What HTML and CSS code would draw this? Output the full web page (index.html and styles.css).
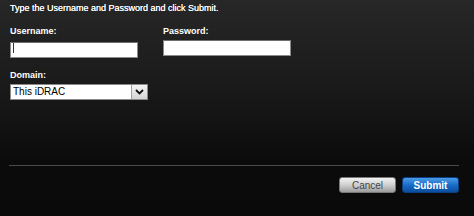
FILE: index.html
```html
<!DOCTYPE html>
<html>
    <head>
        <meta charset="UTF-8">
        <title>iDRAC Login</title>
        <link rel="stylesheet" href="styles.css">
    </head>
    <body>
        <div class="login-box">
            <p class="intro">Type the Username and Password and click Submit.</p>
            <div class="fields">
                <div class="field">
                    <label for="user">Username:</label>
                    <div class="input-wrap">
                        <input type="text" id="user" class="text-input">
                        <span class="caret"></span>
                    </div>
                </div>
                <div class="field">
                    <label for="pass">Password:</label>
                    <input type="password" id="pass" class="text-input">
                </div>
            </div>
            <div class="field">
                <label>Domain:</label>
                <div class="select">
                    <span class="select-text">This iDRAC</span>
                    <span class="select-arrow">
                        <svg width="9" height="6" viewBox="0 0 9 6">
                            <path d="M1 1 L4.5 4.5 L8 1" fill="none" stroke="#111" stroke-width="1.8"/>
                        </svg>
                    </span>
                </div>
            </div>
            <div class="footer">
                <button class="btn cancel">Cancel</button>
                <button class="btn submit">Submit</button>
            </div>
        </div>
    </body>
</html>
```

FILE: styles.css
```css
*{
    margin: 0;
    padding: 0;
    box-sizing: border-box;
    font-family: "Liberation Sans", Arial, sans-serif;
}
html, body{
    height: 100%;
}
body{
    background: linear-gradient(#272727 0%, #1a1a1a 40%, #0b0b0b 75%, #0a0a0a 100%);
    color: white;
}
.login-box{
    padding: 2px 15px 0 9px;
}
.intro{
    font-size: 9px;
    padding-left: 1px;
    line-height: 12px;
    text-shadow: 0 0 0.4px #fff;
}
.fields{
    display: flex;
    gap: 24px;
    margin-top: 11px;
}
.field{
    display: flex;
    flex-direction: column;
    padding-left: 1px;
}
.fields + .field{
    margin-top: 11px;
}
label{
    font-size: 9px;
    font-weight: bold;
    line-height: 12px;
    margin-bottom: 3px;
}
.input-wrap{
    position: relative;
}
.text-input{
    width: 128px;
    height: 16px;
    border: 1px solid #8a8a8a;
    border-top-color: #6e6e6e;
    background: #fff;
    outline: none;
}
.caret{
    position: absolute;
    left: 3px;
    top: 3px;
    width: 1px;
    height: 10px;
    background: #333;
}
.select{
    display: flex;
    width: 138px;
    height: 16px;
    background: #fff;
    border: 1px solid #8a8a8a;
    color: #000;
}
.select-text{
    flex: 1;
    font-size: 10px;
    line-height: 14px;
    padding-left: 2px;
}
.select-arrow{
    width: 16px;
    display: flex;
    align-items: center;
    justify-content: center;
    background: linear-gradient(#f4f4f4, #d4d4d4);
    border-left: 1px solid #a0a0a0;
}
.footer{
    margin-top: 65px;
    border-top: 1px solid #4a4a4a;
    display: flex;
    justify-content: flex-end;
    gap: 6px;
    padding-top: 11px;
}
.btn{
    width: 57px;
    height: 16px;
    border-radius: 3px;
    font-size: 10px;
    cursor: pointer;
}
.cancel{
    background: linear-gradient(#f2f2f2, #cfcfcf 50%, #9c9c9c);
    border: 1px solid #777;
    color: #444;
}
.submit{
    background: linear-gradient(#4a9ce8, #1b6cc8 50%, #0b4d9e);
    border: 1px solid #0b3f80;
    color: #fff;
    font-weight: bold;
}
```
